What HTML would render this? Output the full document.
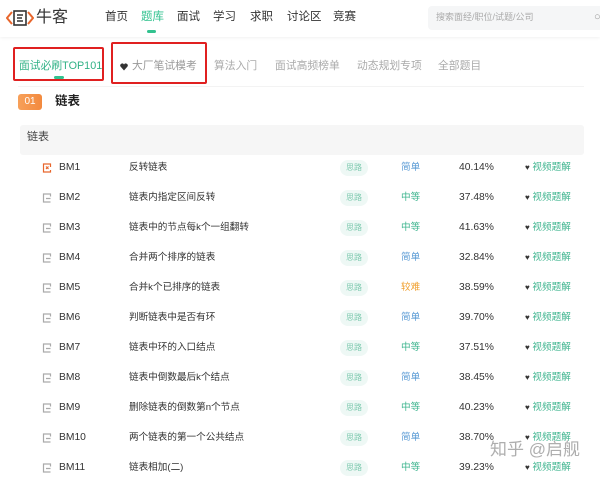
<!DOCTYPE html>
<html><head><meta charset="utf-8"><style>
*{margin:0;padding:0;box-sizing:border-box}
body{width:600px;height:477px;overflow:hidden;background:#fff;font-family:"Liberation Sans","Noto Sans CJK SC",sans-serif;color:#333;position:relative}
.a{position:absolute;white-space:nowrap;line-height:1.2}
.hdr{position:absolute;left:0;top:0;width:600px;height:37px;background:#fff;box-shadow:0 1px 3px rgba(0,0,0,.06)}
.nav{font-size:11.5px;color:#333;top:11px}
.tab{font-size:10.8px;color:#aaa;top:60px}
.row{position:absolute;left:0;width:600px;height:30px;font-size:9.6px;color:#333}
.row span{position:absolute;top:8px;white-space:nowrap;line-height:14px}
.row svg.ic{position:absolute;left:42px;top:10px}
.pill{position:absolute;left:340px;top:7px;width:28px;height:16px;border-radius:8px;background:#eef8f5;color:#7cc9ae;font-size:8px;text-align:center;line-height:16px}
.v{color:#3fb58f}
.p{font-size:10.3px}
.red{position:absolute;border:2px solid #e02020;border-radius:2px}
</style></head><body>
<div class="hdr"></div>
<svg class="a" style="left:6px;top:9px" width="28" height="18" viewBox="0 0 28 18"><path d="M6 3 L1 9 L6 15" stroke="#e8662c" stroke-width="2" fill="none"/><path d="M22 3 L27 9 L22 15" stroke="#e8662c" stroke-width="2" fill="none"/><rect x="8" y="2" width="12" height="14" stroke="#333" stroke-width="1.6" fill="none"/><path d="M11 6h6M11 9h5M11 12h6" stroke="#333" stroke-width="1.4"/></svg>
<div class="a" style="left:36px;top:8px;font-size:16px;color:#333">牛客</div>
<div class="a nav" style="left:105px">首页</div>
<div class="a nav" style="left:141px;color:#32c28f">题库</div>
<div class="a" style="left:147px;top:30px;width:9px;height:3px;background:#32c28f;border-radius:2px"></div>
<div class="a nav" style="left:177px">面试</div>
<div class="a nav" style="left:213px">学习</div>
<div class="a nav" style="left:250px">求职</div>
<div class="a nav" style="left:287px">讨论区</div>
<div class="a nav" style="left:333px">竞赛</div>
<div class="a" style="left:428px;top:6px;width:180px;height:24px;background:#f5f6f7;border-radius:4px"></div>
<div class="a" style="left:436px;top:12px;font-size:9px;color:#aaa">搜索面经/职位/试题/公司</div>
<div class="a" style="left:594px;top:11px;font-size:11px;color:#999">○</div>

<div class="a tab" style="left:19px;color:#32b286">面试必刷TOP101</div>
<div class="a" style="left:54px;top:76px;width:10px;height:3px;background:#32c28f;border-radius:2px"></div>
<svg class="a" style="left:120px;top:63px" width="8" height="8" viewBox="0 0 8 8"><path d="M4 7.5 L0.5 3.5 A2 2 0 0 1 4 1.5 A2 2 0 0 1 7.5 3.5 Z" fill="#333"/></svg>
<div class="a tab" style="left:132px;color:#999">大厂笔试模考</div>
<div class="a tab" style="left:214px">算法入门</div>
<div class="a tab" style="left:275px">面试高频榜单</div>
<div class="a tab" style="left:357px">动态规划专项</div>
<div class="a tab" style="left:438px">全部题目</div>
<div class="red" style="left:13px;top:47px;width:91px;height:34px"></div>
<div class="red" style="left:111px;top:42px;width:96px;height:42px"></div>
<div class="a" style="left:18px;top:86px;width:566px;height:1px;background:#f3f3f3"></div>

<div class="a" style="left:18px;top:94px;width:24px;height:16px;border-radius:3px;background:linear-gradient(90deg,#f7a05a,#f38a3e);color:#fff;font-size:10px;text-align:center;line-height:16px">01</div>
<div class="a" style="left:55px;top:94px;font-size:12.5px;font-weight:bold;color:#222">链表</div>

<div class="a" style="left:20px;top:125px;width:564px;height:30px;background:#f6f6f6;border-radius:3px"></div>
<div class="a" style="left:27px;top:131px;font-size:11px;color:#444">链表</div>

<div class="row" style="top:153px"><svg class="ic" width="10" height="10"><path d="M8.5 4V1H1.5V9H8.5V7M4 3.5L6.5 6M6.5 3.5L4 6" stroke="#e8662c" stroke-width="1.2" fill="none"/></svg><span class="p" style="left:59px">BM1</span><span style="left:129px">反转链表</span><div class="pill">思路</div><span style="left:401px;color:#5b9bd5">简单</span><span class="p" style="left:459px">40.14%</span><span style="left:525px" class="v"><b style="color:#333;font-size:8px">♥</b> 视频题解</span></div>
<div class="row" style="top:183px"><svg class="ic" width="10" height="10"><path d="M8.5 3.5V1H1.5V9H8.5M4 5.5H8.5" stroke="#aaa" stroke-width="1.2" fill="none"/></svg><span class="p" style="left:59px">BM2</span><span style="left:129px">链表内指定区间反转</span><div class="pill">思路</div><span style="left:401px" class="v">中等</span><span class="p" style="left:459px">37.48%</span><span style="left:525px" class="v"><b style="color:#333;font-size:8px">♥</b> 视频题解</span></div>
<div class="row" style="top:213px"><svg class="ic" width="10" height="10"><path d="M8.5 3.5V1H1.5V9H8.5M4 5.5H8.5" stroke="#aaa" stroke-width="1.2" fill="none"/></svg><span class="p" style="left:59px">BM3</span><span style="left:129px">链表中的节点每k个一组翻转</span><div class="pill">思路</div><span style="left:401px" class="v">中等</span><span class="p" style="left:459px">41.63%</span><span style="left:525px" class="v"><b style="color:#333;font-size:8px">♥</b> 视频题解</span></div>
<div class="row" style="top:243px"><svg class="ic" width="10" height="10"><path d="M8.5 3.5V1H1.5V9H8.5M4 5.5H8.5" stroke="#aaa" stroke-width="1.2" fill="none"/></svg><span class="p" style="left:59px">BM4</span><span style="left:129px">合并两个排序的链表</span><div class="pill">思路</div><span style="left:401px;color:#5b9bd5">简单</span><span class="p" style="left:459px">32.84%</span><span style="left:525px" class="v"><b style="color:#333;font-size:8px">♥</b> 视频题解</span></div>
<div class="row" style="top:273px"><svg class="ic" width="10" height="10"><path d="M8.5 3.5V1H1.5V9H8.5M4 5.5H8.5" stroke="#aaa" stroke-width="1.2" fill="none"/></svg><span class="p" style="left:59px">BM5</span><span style="left:129px">合并k个已排序的链表</span><div class="pill">思路</div><span style="left:401px;color:#f0a030">较难</span><span class="p" style="left:459px">38.59%</span><span style="left:525px" class="v"><b style="color:#333;font-size:8px">♥</b> 视频题解</span></div>
<div class="row" style="top:303px"><svg class="ic" width="10" height="10"><path d="M8.5 3.5V1H1.5V9H8.5M4 5.5H8.5" stroke="#aaa" stroke-width="1.2" fill="none"/></svg><span class="p" style="left:59px">BM6</span><span style="left:129px">判断链表中是否有环</span><div class="pill">思路</div><span style="left:401px;color:#5b9bd5">简单</span><span class="p" style="left:459px">39.70%</span><span style="left:525px" class="v"><b style="color:#333;font-size:8px">♥</b> 视频题解</span></div>
<div class="row" style="top:333px"><svg class="ic" width="10" height="10"><path d="M8.5 3.5V1H1.5V9H8.5M4 5.5H8.5" stroke="#aaa" stroke-width="1.2" fill="none"/></svg><span class="p" style="left:59px">BM7</span><span style="left:129px">链表中环的入口结点</span><div class="pill">思路</div><span style="left:401px" class="v">中等</span><span class="p" style="left:459px">37.51%</span><span style="left:525px" class="v"><b style="color:#333;font-size:8px">♥</b> 视频题解</span></div>
<div class="row" style="top:363px"><svg class="ic" width="10" height="10"><path d="M8.5 3.5V1H1.5V9H8.5M4 5.5H8.5" stroke="#aaa" stroke-width="1.2" fill="none"/></svg><span class="p" style="left:59px">BM8</span><span style="left:129px">链表中倒数最后k个结点</span><div class="pill">思路</div><span style="left:401px;color:#5b9bd5">简单</span><span class="p" style="left:459px">38.45%</span><span style="left:525px" class="v"><b style="color:#333;font-size:8px">♥</b> 视频题解</span></div>
<div class="row" style="top:393px"><svg class="ic" width="10" height="10"><path d="M8.5 3.5V1H1.5V9H8.5M4 5.5H8.5" stroke="#aaa" stroke-width="1.2" fill="none"/></svg><span class="p" style="left:59px">BM9</span><span style="left:129px">删除链表的倒数第n个节点</span><div class="pill">思路</div><span style="left:401px" class="v">中等</span><span class="p" style="left:459px">40.23%</span><span style="left:525px" class="v"><b style="color:#333;font-size:8px">♥</b> 视频题解</span></div>
<div class="row" style="top:423px"><svg class="ic" width="10" height="10"><path d="M8.5 3.5V1H1.5V9H8.5M4 5.5H8.5" stroke="#aaa" stroke-width="1.2" fill="none"/></svg><span class="p" style="left:59px">BM10</span><span style="left:129px">两个链表的第一个公共结点</span><div class="pill">思路</div><span style="left:401px;color:#5b9bd5">简单</span><span class="p" style="left:459px">38.70%</span><span style="left:525px" class="v"><b style="color:#333;font-size:8px">♥</b> 视频题解</span></div>
<div class="row" style="top:453px"><svg class="ic" width="10" height="10"><path d="M8.5 3.5V1H1.5V9H8.5M4 5.5H8.5" stroke="#aaa" stroke-width="1.2" fill="none"/></svg><span class="p" style="left:59px">BM11</span><span style="left:129px">链表相加(二)</span><div class="pill">思路</div><span style="left:401px" class="v">中等</span><span class="p" style="left:459px">39.23%</span><span style="left:525px" class="v"><b style="color:#333;font-size:8px">♥</b> 视频题解</span></div>
<div class="a" style="left:490px;top:440px;font-size:17px;color:rgba(160,160,160,.85)">知乎 @启舰</div>
</body></html>
